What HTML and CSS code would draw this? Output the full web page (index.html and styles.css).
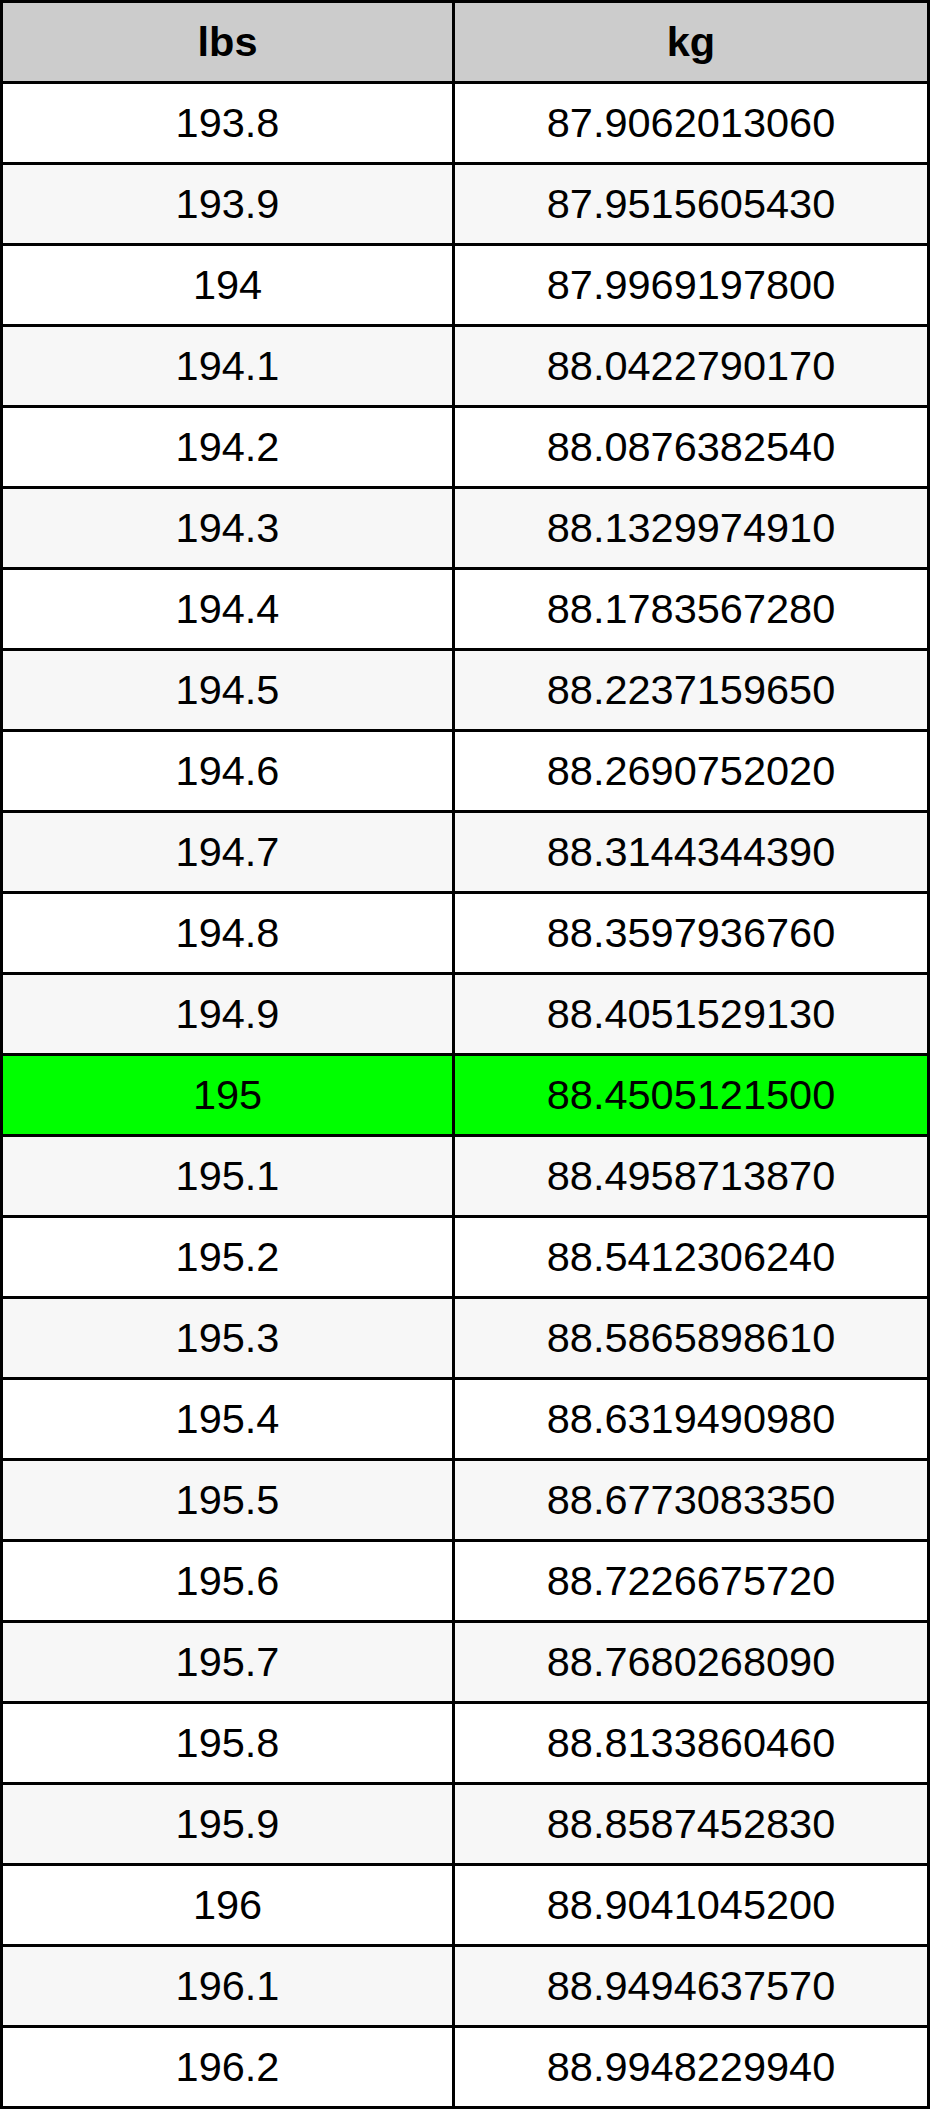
FILE: index.html
```html
<!DOCTYPE html>
<html lang="en">
<head>
<meta charset="utf-8">
<title>lbs to kg</title>
<link rel="stylesheet" href="styles.css">
</head>
<body>
<table class="conv">
  <colgroup><col class="c1"><col class="c2"></colgroup>
  <thead>
    <tr><th>lbs</th><th>kg</th></tr>
  </thead>
  <tbody>
    <tr><td>193.8</td><td>87.9062013060</td></tr>
    <tr><td>193.9</td><td>87.9515605430</td></tr>
    <tr><td>194</td><td>87.9969197800</td></tr>
    <tr><td>194.1</td><td>88.0422790170</td></tr>
    <tr><td>194.2</td><td>88.0876382540</td></tr>
    <tr><td>194.3</td><td>88.1329974910</td></tr>
    <tr><td>194.4</td><td>88.1783567280</td></tr>
    <tr><td>194.5</td><td>88.2237159650</td></tr>
    <tr><td>194.6</td><td>88.2690752020</td></tr>
    <tr><td>194.7</td><td>88.3144344390</td></tr>
    <tr><td>194.8</td><td>88.3597936760</td></tr>
    <tr><td>194.9</td><td>88.4051529130</td></tr>
    <tr class="hl"><td>195</td><td>88.4505121500</td></tr>
    <tr><td>195.1</td><td>88.4958713870</td></tr>
    <tr><td>195.2</td><td>88.5412306240</td></tr>
    <tr><td>195.3</td><td>88.5865898610</td></tr>
    <tr><td>195.4</td><td>88.6319490980</td></tr>
    <tr><td>195.5</td><td>88.6773083350</td></tr>
    <tr><td>195.6</td><td>88.7226675720</td></tr>
    <tr><td>195.7</td><td>88.7680268090</td></tr>
    <tr><td>195.8</td><td>88.8133860460</td></tr>
    <tr><td>195.9</td><td>88.8587452830</td></tr>
    <tr><td>196</td><td>88.9041045200</td></tr>
    <tr><td>196.1</td><td>88.9494637570</td></tr>
    <tr><td>196.2</td><td>88.9948229940</td></tr>
  </tbody>
</table>
</body>
</html>
```

FILE: styles.css
```css
html, body {
  margin: 0;
  padding: 0;
  background: #ffffff;
}

.conv {
  width: 930px;
  table-layout: fixed;
  border-collapse: separate;
  border-spacing: 3px;
  background: #000000;
  font-family: "Liberation Sans", Arial, sans-serif;
  font-size: 41.5px;
  color: #000000;
}

.conv .c1 { width: 449px; }
.conv .c2 { width: 472px; }

.conv th,
.conv td {
  height: 78px;
  padding: 0;
  text-align: center;
  vertical-align: middle;
  line-height: 1;
}

.conv th {
  background: #cccccc;
  font-weight: bold;
}

.conv tbody tr:nth-child(odd) td { background: #ffffff; }
.conv tbody tr:nth-child(even) td { background: #f7f7f7; }
.conv tbody tr.hl td { background: #00ff00; }
```
